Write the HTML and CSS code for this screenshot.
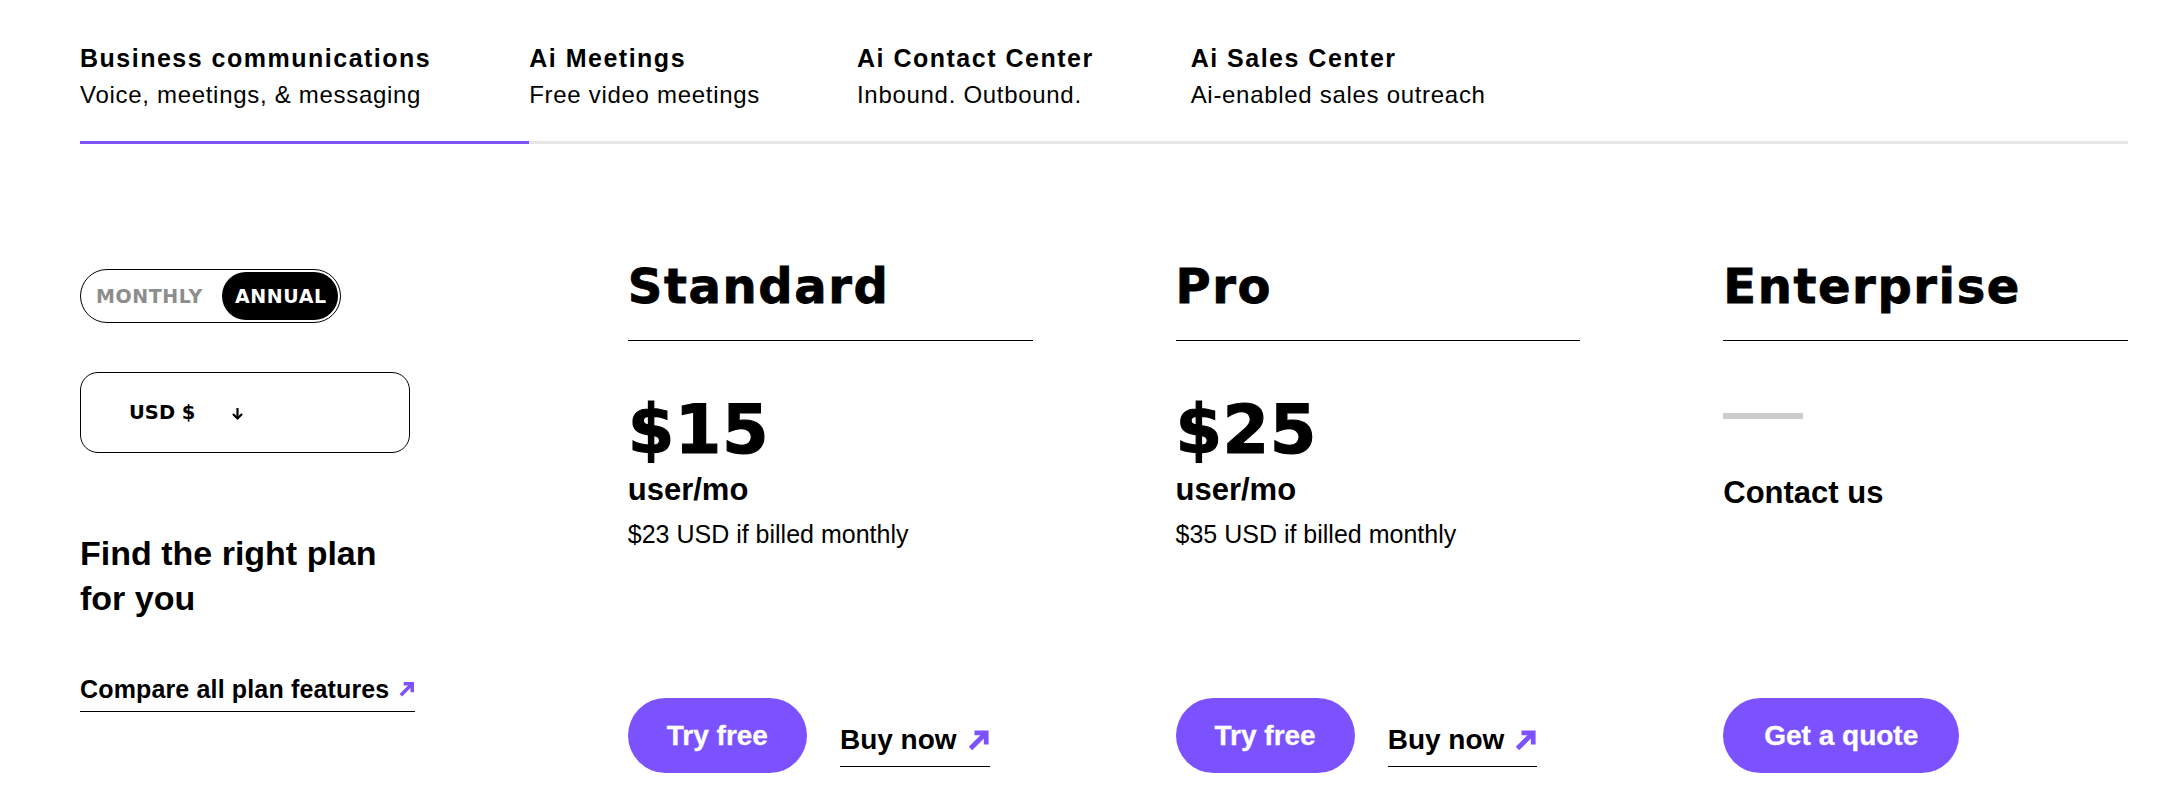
FILE: index.html
```html
<!DOCTYPE html>
<html lang="en">
<head>
<meta charset="utf-8">
<title>Pricing</title>
<link rel="stylesheet" href="styles.css">
</head>
<body>
<div class="page">
  <nav class="tabs">
    <a class="tab active" href="#"><span class="tab-title">Business communications</span><span class="tab-sub">Voice, meetings, &amp; messaging</span></a>
    <a class="tab" href="#"><span class="tab-title">Ai Meetings</span><span class="tab-sub">Free video meetings</span></a>
    <a class="tab" href="#"><span class="tab-title">Ai Contact Center</span><span class="tab-sub">Inbound. Outbound.</span></a>
    <a class="tab" href="#"><span class="tab-title">Ai Sales Center</span><span class="tab-sub">Ai-enabled sales outreach</span></a>
  </nav>

  <section class="pricing">
    <aside class="intro">
      <div class="toggle">
        <span class="toggle-opt">MONTHLY</span>
        <span class="toggle-opt on">ANNUAL</span>
      </div>
      <button class="currency" type="button">
        <span>USD $</span>
        <svg class="down" width="13" height="12" viewBox="0 0 12 11" fill="none" stroke="#000" stroke-width="2"><path d="M6 0 V9.5"/><path d="M1.8 5.5 L6 9.6 L10.2 5.5"/></svg>
      </button>
      <h2 class="intro-title">Find the right plan for you</h2>
      <a class="compare" href="#">Compare all plan features
        <svg class="arrow-sm" width="16" height="16" viewBox="0 0 22 22" fill="none" stroke="#7c52ff" stroke-width="4.8"><path d="M2.5 19.5 L17.5 4.5"/><path d="M6.5 3.8 H18.2 V15.5"/></svg>
      </a>
    </aside>

    <div class="plan">
      <h3 class="plan-name">Standard</h3>
      <div class="plan-body">
        <div class="price">$15</div>
        <div class="unit">user/mo</div>
        <div class="note">$23 USD if billed monthly</div>
      </div>
      <div class="actions">
        <a class="btn" href="#">Try free</a>
        <a class="buy" href="#">Buy now
          <svg width="22" height="22" viewBox="0 0 22 22" fill="none" stroke="#7c52ff" stroke-width="4.8"><path d="M2.5 19.5 L17.5 4.5"/><path d="M6.5 3.8 H18.2 V15.5"/></svg>
        </a>
      </div>
    </div>

    <div class="plan">
      <h3 class="plan-name">Pro</h3>
      <div class="plan-body">
        <div class="price">$25</div>
        <div class="unit">user/mo</div>
        <div class="note">$35 USD if billed monthly</div>
      </div>
      <div class="actions">
        <a class="btn" href="#">Try free</a>
        <a class="buy" href="#">Buy now
          <svg width="22" height="22" viewBox="0 0 22 22" fill="none" stroke="#7c52ff" stroke-width="4.8"><path d="M2.5 19.5 L17.5 4.5"/><path d="M6.5 3.8 H18.2 V15.5"/></svg>
        </a>
      </div>
    </div>

    <div class="plan">
      <h3 class="plan-name">Enterprise</h3>
      <div class="plan-body">
        <div class="dash"></div>
        <div class="contact">Contact us</div>
      </div>
      <div class="actions">
        <a class="btn wide" href="#">Get a quote</a>
      </div>
    </div>
  </section>
</div>
</body>
</html>
```

FILE: styles.css
```css
* { box-sizing: border-box; }

html, body {
  margin: 0;
  background: #fff;
  color: #000;
  font-family: "Liberation Sans", Arial, sans-serif;
}

a { color: inherit; text-decoration: none; }

.page {
  padding: 43px 44px 0 80px;
}

/* Tabs */
.tabs {
  display: flex;
  border-bottom: 3px solid #e6e6e6;
}

.tab {
  display: flex;
  flex-direction: column;
  padding: 0 97px 31px 0;
  border-bottom: 3px solid transparent;
  margin-bottom: -3px;
}

.tab.active {
  padding-right: 98px;
  border-bottom-color: #7c52ff;
}

.tab-title {
  font-size: 25px;
  line-height: 30px;
  font-weight: 700;
  letter-spacing: 1.5px;
}

.tab-sub {
  margin-top: 7px;
  font-size: 24px;
  line-height: 30px;
  letter-spacing: 0.7px;
}

/* Pricing grid */
.pricing {
  display: grid;
  grid-template-columns: repeat(4, 1fr);
  column-gap: 143px;
  margin-top: 114px;
}

.intro {
  display: flex;
  flex-direction: column;
  align-items: flex-start;
  padding-top: 11px;
}

.toggle {
  display: flex;
  align-items: center;
  height: 54px;
  padding: 2px;
  border: 1px solid #000;
  border-radius: 27px;
  font-family: "DejaVu Sans", sans-serif;
  font-weight: 700;
  font-size: 19px;
  letter-spacing: 0.6px;
}

.toggle-opt {
  display: flex;
  align-items: center;
  height: 48px;
  padding: 0 19px 0 13px;
  color: #8d8d8d;
}

.toggle-opt.on {
  padding: 0 11px 0 13px;
  background: #000;
  color: #fff;
  border-radius: 24px;
}

.currency {
  display: flex;
  align-items: center;
  gap: 36px;
  width: 330px;
  height: 81px;
  margin-top: 49px;
  padding: 0 0 0 48px;
  background: #fff;
  border: 1px solid #000;
  border-radius: 18px;
  font-family: "DejaVu Sans", sans-serif;
  font-weight: 700;
  font-size: 19.5px;
  color: #000;
}

.down { margin-top: 3px; }

.intro-title {
  max-width: 320px;
  margin: 78px 0 0;
  font-size: 34px;
  line-height: 45px;
  font-weight: 700;
}

.compare {
  display: inline-flex;
  align-items: center;
  gap: 10px;
  margin-top: 53px;
  padding-bottom: 7px;
  border-bottom: 1px solid #000;
  font-size: 25px;
  line-height: 30px;
  font-weight: 700;
  letter-spacing: 0.15px;
}

/* Plans */
.plan {
  display: flex;
  flex-direction: column;
}

.plan-name {
  margin: 0;
  padding-bottom: 26px;
  border-bottom: 1px solid #000;
  font-family: "DejaVu Sans", sans-serif;
  font-size: 48px;
  line-height: 56px;
  font-weight: 700;
  letter-spacing: 1.6px;
  -webkit-text-stroke: 0.8px #000;
}

.plan-body {
  height: 357px;
}

.price {
  margin-top: 56px;
  font-family: "DejaVu Sans", sans-serif;
  font-size: 67px;
  line-height: 67px;
  font-weight: 700;
  letter-spacing: 0.5px;
  -webkit-text-stroke: 1.2px #000;
}

.unit {
  margin-top: 8px;
  font-size: 31px;
  line-height: 36px;
  font-weight: 700;
}

.note {
  margin-top: 10px;
  font-size: 25px;
  line-height: 32px;
}

.dash {
  width: 80px;
  height: 6px;
  margin-top: 72px;
  background: #cccccc;
}

.contact {
  margin-top: 56px;
  font-size: 31px;
  line-height: 36px;
  font-weight: 700;
}

.actions {
  display: flex;
  align-items: flex-end;
  gap: 33px;
}

.btn {
  display: inline-flex;
  align-items: center;
  justify-content: center;
  height: 75px;
  padding: 0 39px;
  border-radius: 38px;
  background: #7c52ff;
  color: #fff;
  font-size: 28px;
  font-weight: 700;
  -webkit-text-stroke: 0.3px #fff;
}

.btn.wide { padding: 0 41px; }

.buy {
  display: inline-flex;
  align-items: center;
  gap: 11px;
  margin-bottom: 6px;
  padding-bottom: 11px;
  border-bottom: 1px solid #000;
  font-size: 28px;
  line-height: 30px;
  font-weight: 700;
}
```
